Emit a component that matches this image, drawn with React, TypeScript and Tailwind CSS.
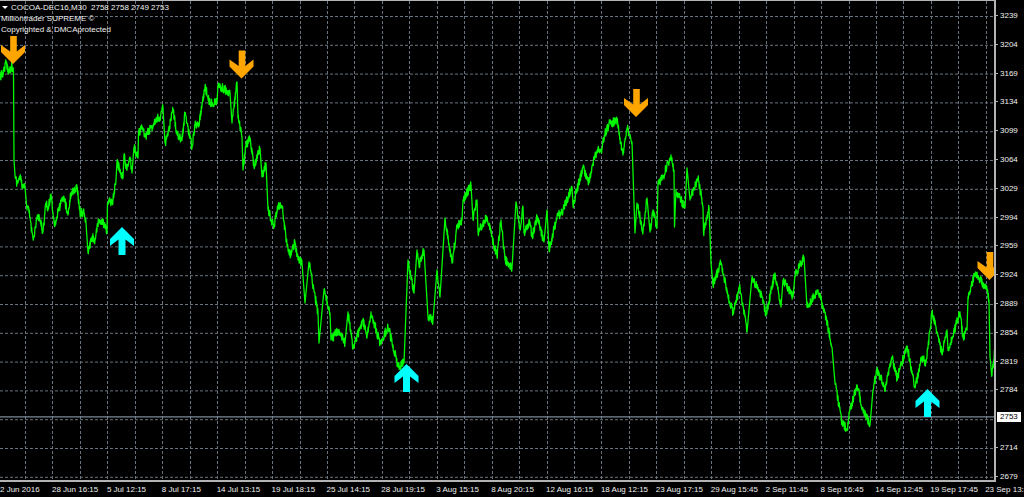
const PRICES = ["3239","3204","3169","3134","3099","3064","3029","2994","2959","2924","2889","2854","2819","2784","","2714","2679"];
const DATES = ["2 Jun 2016","28 Jun 16:15","5 Jul 12:15","8 Jul 17:15","14 Jul 13:15","19 Jul 18:15","25 Jul 14:15","28 Jul 19:15","3 Aug 15:15","8 Aug 20:15","12 Aug 16:15","18 Aug 12:15","23 Aug 17:15","29 Aug 15:45","2 Sep 11:45","8 Sep 16:45","14 Sep 12:45","19 Sep 17:45","23 Sep 13:45"];

const KEY: number[][] = [[0,77],[3,73],[6,63],[9,72],[12,65],[13.5,73],[14,160],[15,175],[17,183],[20,177],[23,188],[25,187],[27,210],[28,207],[30,217],[32,233],[34,237],[37,217],[40,220],[43,232],[46,203],[48,210],[51,194],[53,213],[55,225],[58,212],[61,203],[64,197],[68,215],[71,193],[77,187],[80,213],[84,213],[86,223],[88,253],[92,237],[95,240],[99,220],[103,223],[107,232],[107.5,203],[113,200],[116,180],[117,162],[123,178],[124,155],[127,170],[130,157],[132,173],[134,147],[138,158],[138.5,133],[142,127],[145,137],[153,125],[156,118],[160,118],[163,108],[165,143],[168,135],[173,110],[177,133],[182,140],[185,113],[192,147],[195,125],[199,123],[202,105],[205,87],[210,103],[217,102],[218,85],[230,93],[232,123],[237,82],[238,118],[242,137],[243,170],[246,145],[250,138],[254,167],[260,148],[262,177],[266,163],[268,210],[274,227],[278,205],[282,206],[287,245],[290,255],[295,242],[298,260],[302,263],[305,303],[309,262],[318,313],[319,343],[324,290],[330,313],[331,340],[338,330],[345,343],[348,312],[353,348],[363,320],[367,338],[371,312],[380,343],[388,327],[393,345],[398,367],[404,363],[408,260],[414,293],[417,250],[419,265],[424,250],[428,317],[433,320],[437,270],[440,297],[445,218],[452,263],[457,227],[462,220],[463,200],[471,185],[473,220],[477,200],[478,232],[487,217],[497,257],[501,220],[505,260],[512,268],[516,202],[520,230],[523,207],[524,233],[530,222],[532,237],[537,217],[544,242],[547,210],[549,250],[557,217],[563,210],[572,187],[573,205],[583,167],[589,183],[593,163],[598,148],[601,152],[605,133],[610,123],[617,121],[623,155],[627,128],[632,142],[632.5,157],[635,233],[637,203],[643,232],[647,198],[650,232],[653,210],[657,228],[658,183],[663,177],[671,155],[674,170],[674.5,227],[676,190],[685,208],[687,168],[690,200],[698,178],[703,207],[703.5,233],[709,207],[711,263],[713,285],[721,262],[728,297],[733,312],[740,287],[747,332],[752,277],[762,297],[766,315],[775,273],[781,307],[783,280],[793,297],[795,275],[804,257],[807,307],[818,290],[825,313],[832,347],[835,383],[842,422],[847,430],[850,410],[857,385],[863,410],[870,425],[873,390],[877,370],[885,388],[892,357],[897,378],[907,346],[915,388],[922,357],[926,363],[930,330],[932,312],[942,353],[947,330],[948,350],[960,312],[963,338],[967,330],[968,297],[975,273],[987,290],[989,300],[990,357],[992,375],[995,348]];

function buildPath() {
  let seed = 12345;
  const rnd = () => {
    seed = (seed * 16807) % 2147483647;
    return seed / 2147483647 - 0.5;
  };
  let d = `M${KEY[0][0]} ${KEY[0][1]}`;
  for (let i = 1; i < KEY.length; i++) {
    const [x0, y0] = KEY[i - 1];
    const [x1, y1] = KEY[i];
    const dx = x1 - x0;
    const n = Math.max(1, Math.floor(dx / 0.3));
    const steep = Math.abs(y1 - y0) / Math.max(dx, 0.1) > 10;
    for (let k = 1; k <= n; k++) {
      const t = k / n;
      const j = k === n || steep ? 0 : rnd() * 9;
      d += `L${(x0 + dx * t).toFixed(2)} ${(y0 + (y1 - y0) * t + j).toFixed(2)}`;
    }
  }
  return d;
}

function Down({ x, y }: { x: number; y: number }) {
  const p = [[-2.8,0],[3.8,0],[3.8,15.5],[12,9],[12,16],[0,28],[-12,16],[-12,9],[-2.8,15.5]];
  return <polygon fill="#ffa500" points={p.map(([a, b]) => `${x + a},${y + b}`).join(" ")} />;
}

function Up({ x, y }: { x: number; y: number }) {
  const p = [[0,0],[12,12],[12,19],[3.5,12.5],[3.5,28],[-3.5,28],[-3.5,12.5],[-12,19],[-12,12]];
  return <polygon fill="#00ffff" points={p.map(([a, b]) => `${x + a},${y + b}`).join(" ")} />;
}

export default function App() {
  const path = buildPath();
  const hLines = Array.from({ length: 17 }, (_, i) => 16.5 + i * 28.8);
  const vLines = Array.from({ length: 36 }, (_, i) => Math.round(25 + i * 27.45) + 0.5);
  return (
    <div className="w-[1024px] h-[497px] bg-black overflow-hidden flex flex-col font-['Liberation_Sans',sans-serif] text-[8px] leading-[11px] text-[#f0f0f0]">
      <div className="flex h-[482px]">
        <div className="relative w-[996px] h-[482px] border-t border-r-2 border-b-2 border-[#b4b4b4] overflow-hidden">
          <svg width="994" height="479" viewBox="0 1 994 479" className="block">
            {hLines.map((y) => (
              <line key={y} x1="0" x2="994" y1={y} y2={y} stroke="#69747f" strokeWidth="1" strokeDasharray="3 2" />
            ))}
            {vLines.map((x) => (
              <line key={x} x1={x} x2={x} y1="1" y2="480" stroke="#69747f" strokeWidth="1" strokeDasharray="3 2" />
            ))}
            <line x1="0" x2="994" y1="416.8" y2="416.8" stroke="#7d8a98" strokeWidth="1.2" />
            <path d={path} fill="none" stroke="#00f800" strokeWidth="1.3" strokeLinejoin="round" />
            <Down x={13} y={36} />
            <Down x={241.5} y={50.5} />
            <Down x={636} y={89} />
            <Down x={989.5} y={252} />
            <Up x={122} y={227} />
            <Up x={406.5} y={364} />
            <Up x={927.5} y={389} />
          </svg>
          <div className="absolute left-[1px] top-[1px] flex flex-col">
            <div className="flex items-center h-[11px] whitespace-pre">
              <span className="w-0 h-0 ml-[1px] mr-[3px] border-x-[3px] border-x-transparent border-t-[3px] border-t-white" />
              <span>COCOA-DEC16,M30  2758 2758 2749 2753</span>
            </div>
            <div>Milliontrader SUPREME ©</div>
            <div>Copyrighted &amp; DMCAprotected</div>
          </div>
        </div>
        <div className="relative flex-1 flex flex-col pt-[10px]">
          {PRICES.map((p, i) => (
            <div key={i} className="h-[28.8px] shrink-0 flex items-start gap-[1px]">
              {p && <span className="w-[2px] h-px mt-[5px] bg-[#b4b4b4]" />}
              {p && <span className="ml-[1px]">{p}</span>}
            </div>
          ))}
          <div className="absolute left-[1px] top-[412px] w-[24px] h-[10px] leading-[10px] bg-white text-black pl-[3px]">2753</div>
        </div>
      </div>
      <div className="flex whitespace-nowrap pt-[2px]">
        <div className="w-[52px] shrink-0">{DATES[0]}</div>
        {DATES.slice(1).map((d) => (
          <div key={d} className="w-[54.9px] shrink-0">
            {d}
          </div>
        ))}
      </div>
    </div>
  );
}
